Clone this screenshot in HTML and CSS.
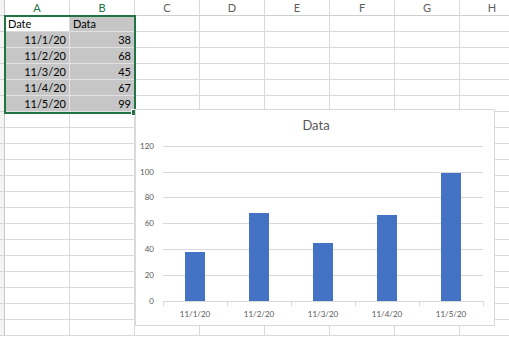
FILE: index.html
```html
<!DOCTYPE html>
<html>
<head>
<meta charset="utf-8">
<link rel="stylesheet" href="styles.css">
</head>
<body>
<div class="sheet">
  <div class="row head">
    <div class="rh"></div>
    <div class="c sel-h">A</div><div class="c sel-h">B</div><div class="c">C</div><div class="c">D</div><div class="c">E</div><div class="c">F</div><div class="c">G</div><div class="c">H</div>
  </div>
  <div class="row"><div class="rh"></div><div class="c active">Date</div><div class="c s">Data</div><div class="c"></div><div class="c"></div><div class="c"></div><div class="c"></div><div class="c"></div><div class="c"></div></div>
  <div class="row"><div class="rh"></div><div class="c s r">11/1/20</div><div class="c s r">38</div><div class="c"></div><div class="c"></div><div class="c"></div><div class="c"></div><div class="c"></div><div class="c"></div></div>
  <div class="row"><div class="rh"></div><div class="c s r">11/2/20</div><div class="c s r">68</div><div class="c"></div><div class="c"></div><div class="c"></div><div class="c"></div><div class="c"></div><div class="c"></div></div>
  <div class="row"><div class="rh"></div><div class="c s r">11/3/20</div><div class="c s r">45</div><div class="c"></div><div class="c"></div><div class="c"></div><div class="c"></div><div class="c"></div><div class="c"></div></div>
  <div class="row"><div class="rh"></div><div class="c s r">11/4/20</div><div class="c s r">67</div><div class="c"></div><div class="c"></div><div class="c"></div><div class="c"></div><div class="c"></div><div class="c"></div></div>
  <div class="row"><div class="rh"></div><div class="c s r">11/5/20</div><div class="c s r">99</div><div class="c"></div><div class="c"></div><div class="c"></div><div class="c"></div><div class="c"></div><div class="c"></div></div>
  <div class="row"><div class="rh"></div><div class="c"></div><div class="c"></div><div class="c"></div><div class="c"></div><div class="c"></div><div class="c"></div><div class="c"></div><div class="c"></div></div>
  <div class="row"><div class="rh"></div><div class="c"></div><div class="c"></div><div class="c"></div><div class="c"></div><div class="c"></div><div class="c"></div><div class="c"></div><div class="c"></div></div>
  <div class="row"><div class="rh"></div><div class="c"></div><div class="c"></div><div class="c"></div><div class="c"></div><div class="c"></div><div class="c"></div><div class="c"></div><div class="c"></div></div>
  <div class="row"><div class="rh"></div><div class="c"></div><div class="c"></div><div class="c"></div><div class="c"></div><div class="c"></div><div class="c"></div><div class="c"></div><div class="c"></div></div>
  <div class="row"><div class="rh"></div><div class="c"></div><div class="c"></div><div class="c"></div><div class="c"></div><div class="c"></div><div class="c"></div><div class="c"></div><div class="c"></div></div>
  <div class="row"><div class="rh"></div><div class="c"></div><div class="c"></div><div class="c"></div><div class="c"></div><div class="c"></div><div class="c"></div><div class="c"></div><div class="c"></div></div>
  <div class="row"><div class="rh"></div><div class="c"></div><div class="c"></div><div class="c"></div><div class="c"></div><div class="c"></div><div class="c"></div><div class="c"></div><div class="c"></div></div>
  <div class="row"><div class="rh"></div><div class="c"></div><div class="c"></div><div class="c"></div><div class="c"></div><div class="c"></div><div class="c"></div><div class="c"></div><div class="c"></div></div>
  <div class="row"><div class="rh"></div><div class="c"></div><div class="c"></div><div class="c"></div><div class="c"></div><div class="c"></div><div class="c"></div><div class="c"></div><div class="c"></div></div>
  <div class="row"><div class="rh"></div><div class="c"></div><div class="c"></div><div class="c"></div><div class="c"></div><div class="c"></div><div class="c"></div><div class="c"></div><div class="c"></div></div>
  <div class="row"><div class="rh"></div><div class="c"></div><div class="c"></div><div class="c"></div><div class="c"></div><div class="c"></div><div class="c"></div><div class="c"></div><div class="c"></div></div>
  <div class="row"><div class="rh"></div><div class="c"></div><div class="c"></div><div class="c"></div><div class="c"></div><div class="c"></div><div class="c"></div><div class="c"></div><div class="c"></div></div>
  <div class="row"><div class="rh"></div><div class="c"></div><div class="c"></div><div class="c"></div><div class="c"></div><div class="c"></div><div class="c"></div><div class="c"></div><div class="c"></div></div>
  <div class="row"><div class="rh"></div><div class="c"></div><div class="c"></div><div class="c"></div><div class="c"></div><div class="c"></div><div class="c"></div><div class="c"></div><div class="c"></div></div>

  <div class="selection"><div class="handle"></div></div>

  <div class="chart">
    <svg width="360" height="217" viewBox="0 0 360 217" xmlns="http://www.w3.org/2000/svg">
      <g stroke="#d9d9d9" stroke-width="1" shape-rendering="crispEdges">
        <line x1="28" y1="37.5" x2="348" y2="37.5"/>
        <line x1="28" y1="63.5" x2="348" y2="63.5"/>
        <line x1="28" y1="88.5" x2="348" y2="88.5"/>
        <line x1="28" y1="114.5" x2="348" y2="114.5"/>
        <line x1="28" y1="140.5" x2="348" y2="140.5"/>
        <line x1="28" y1="166.5" x2="348" y2="166.5"/>
        <line x1="28" y1="192.5" x2="348" y2="192.5"/>
        <line x1="28.5" y1="192" x2="28.5" y2="197"/>
        <line x1="92.5" y1="192" x2="92.5" y2="197"/>
        <line x1="156.5" y1="192" x2="156.5" y2="197"/>
        <line x1="220.5" y1="192" x2="220.5" y2="197"/>
        <line x1="284.5" y1="192" x2="284.5" y2="197"/>
        <line x1="348.5" y1="192" x2="348.5" y2="197"/>
      </g>
      <g fill="#4472c4" shape-rendering="crispEdges">
        <rect x="50" y="143" width="20" height="49"/>
        <rect x="114" y="104" width="20" height="88"/>
        <rect x="178" y="134" width="20" height="58"/>
        <rect x="242" y="105.5" width="20" height="86.5"/>
        <rect x="306" y="64" width="20" height="128"/>
      </g>
      <text class="title" x="181" y="21" text-anchor="middle">Data</text>
      <g class="ylab" text-anchor="end">
        <text x="19" y="40">120</text>
        <text x="19" y="66">100</text>
        <text x="19" y="91">80</text>
        <text x="19" y="117">60</text>
        <text x="19" y="143">40</text>
        <text x="19" y="169">20</text>
        <text x="19" y="195">0</text>
      </g>
      <g class="xlab" text-anchor="middle">
        <text x="60" y="208">11/1/20</text>
        <text x="124" y="208">11/2/20</text>
        <text x="188" y="208">11/3/20</text>
        <text x="252" y="208">11/4/20</text>
        <text x="316" y="208">11/5/20</text>
      </g>
    </svg>
  </div>
</div>
</body>
</html>
```

FILE: styles.css
```css
html, body {
  margin: 0;
  padding: 0;
  background: #ffffff;
  overflow: hidden;
  width: 509px;
  height: 338px;
}

.sheet {
  position: relative;
  width: 525px;
  display: flex;
  flex-direction: column;
  font-family: Lato, "Liberation Sans", sans-serif;
  font-size: 11px;
  color: #000000;
}

.row {
  display: flex;
  height: 16px;
}

.row.head {
  height: 16px;
}

.rh {
  width: 5px;
  flex: none;
  box-sizing: border-box;
  background: #f4f4f4;
  border-right: 1px solid #c9c9c9;
  border-bottom: 1px solid #d4d4d4;
}

.c {
  width: 65px;
  flex: none;
  box-sizing: border-box;
  border-right: 1px solid #dadada;
  border-bottom: 1px solid #dadada;
  padding: 1px 3px 0 3px;
  line-height: 14px;
  white-space: nowrap;
  overflow: hidden;
}

.head .c {
  text-align: center;
  color: #5e5e5e;
  font-size: 11px;
  padding-top: 0;
  line-height: 15px;
  border-bottom: 1px solid #cfcfcf;
}

.head .rh {
  background: #f4f4f4;
  border-bottom: 1px solid #cfcfcf;
}

.head .c.sel-h {
  color: #217346;
}

.c.s {
  background: #c6c6c6;
  border-right-color: #e2e2e2;
  border-bottom-color: #e2e2e2;
}

.c.active {
  background: #ffffff;
}

.c.r {
  text-align: right;
}

.selection {
  position: absolute;
  left: 4px;
  top: 15px;
  width: 132px;
  height: 99px;
  box-sizing: border-box;
  border: 2px solid #217346;
  pointer-events: none;
}

.handle {
  position: absolute;
  right: -4px;
  bottom: -4px;
  width: 5px;
  height: 5px;
  background: #217346;
  border: 1px solid #ffffff;
}

.chart {
  position: absolute;
  left: 135px;
  top: 109px;
  width: 360px;
  height: 217px;
  box-sizing: border-box;
  background: #ffffff;
  border: 1px solid #d9d9d9;
}

.chart svg {
  display: block;
  position: absolute;
  left: -1px;
  top: -1px;
  font-family: Lato, "Liberation Sans", sans-serif;
}

.title {
  font-size: 13px;
  fill: #595959;
}

.ylab, .xlab {
  font-size: 8px;
  fill: #595959;
}
```
